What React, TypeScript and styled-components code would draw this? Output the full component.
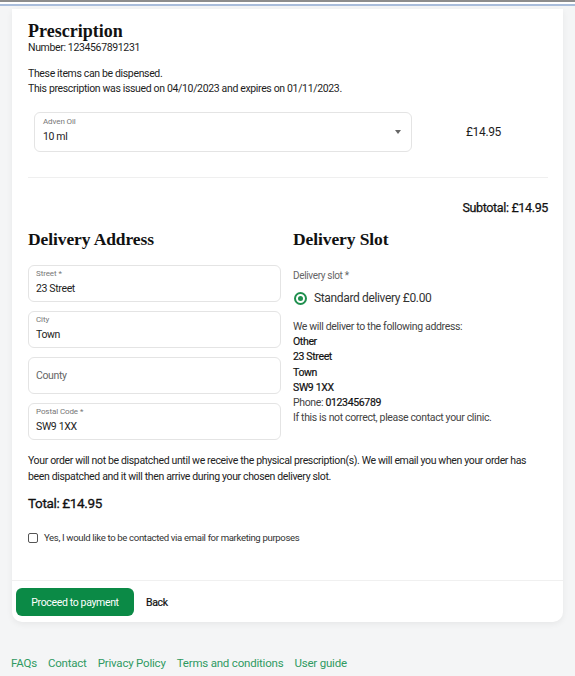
import React from "react";
import styled, { createGlobalStyle } from "styled-components";

const GlobalStyle = createGlobalStyle`
  body {
    margin: 0;
    background-color: #f4f5f6;
    font-family: Roboto, "Liberation Sans", sans-serif;
    letter-spacing: -0.35px;
    color: #1d1d1d;
  }
`;

const addressLines = ["Other", "23 Street", "Town", "SW9 1XX"];
const footerLinks = ["FAQs", "Contact", "Privacy Policy", "Terms and conditions", "User guide"];

export default function App() {
  return (
    <>
      <GlobalStyle />
      <TopBar />
      <Page>
        <Card>
          <CardBody>
            <Title>Prescription</Title>
            <SmallText>Number: 1234567891231</SmallText>
            <InfoBlock>
              <div>These items can be dispensed.</div>
              <div>This prescription was issued on 04/10/2023 and expires on 01/11/2023.</div>
            </InfoBlock>
            <ItemRow>
              <SelectBox>
                <FieldLabel>Adven Oil</FieldLabel>
                <FieldValue>10 ml</FieldValue>
                <Caret />
              </SelectBox>
              <Price>£14.95</Price>
            </ItemRow>
            <Divider />
            <Subtotal>Subtotal: £14.95</Subtotal>
            <Columns>
              <Column>
                <Heading>Delivery Address</Heading>
                <Fields>
                  <Field>
                    <FieldLabel>Street *</FieldLabel>
                    <FieldValue>23 Street</FieldValue>
                  </Field>
                  <Field>
                    <FieldLabel>City</FieldLabel>
                    <FieldValue>Town</FieldValue>
                  </Field>
                  <Field $empty>
                    <Placeholder>County</Placeholder>
                  </Field>
                  <Field>
                    <FieldLabel>Postal Code *</FieldLabel>
                    <FieldValue>SW9 1XX</FieldValue>
                  </Field>
                </Fields>
              </Column>
              <Column>
                <Heading>Delivery Slot</Heading>
                <SlotLabel>Delivery slot *</SlotLabel>
                <RadioRow>
                  <Radio />
                  Standard delivery £0.00
                </RadioRow>
                <AddressBlock>
                  <AddressLine>We will deliver to the following address:</AddressLine>
                  {addressLines.map((line) => (
                    <AddressLine key={line} $strong>
                      {line}
                    </AddressLine>
                  ))}
                  <AddressLine>
                    Phone: <Strong>0123456789</Strong>
                  </AddressLine>
                  <AddressLine>If this is not correct, please contact your clinic.</AddressLine>
                </AddressBlock>
              </Column>
            </Columns>
            <Notice>
              Your order will not be dispatched until we receive the physical prescription(s). We will email you
              when your order has been dispatched and it will then arrive during your chosen delivery slot.
            </Notice>
            <Total>Total: £14.95</Total>
            <CheckRow>
              <CheckBox />
              Yes, I would like to be contacted via email for marketing purposes
            </CheckRow>
          </CardBody>
          <CardFooter>
            <PrimaryButton>Proceed to payment</PrimaryButton>
            <LinkButton>Back</LinkButton>
          </CardFooter>
        </Card>
        <FooterLinks>
          {footerLinks.map((link) => (
            <FooterLink key={link}>{link}</FooterLink>
          ))}
        </FooterLinks>
      </Page>
    </>
  );
}

const TopBar = styled.div`
  height: 2px;
  background-color: #ffffff;
  border-top: 2px solid #8c8c8c;
  border-bottom: 2px solid #a9bddb;
`;

const Page = styled.div`
  padding: 3px 12px 0 12px;
`;

const Card = styled.div`
  background-color: #ffffff;
  border-radius: 0 0 10px 10px;
  box-shadow: 0 2px 6px rgba(0, 0, 0, 0.06);
`;

const CardBody = styled.div`
  padding: 12px 15px 37px 16px;
`;

const Title = styled.div`
  font-family: "Liberation Serif", serif;
  font-weight: bold;
  font-size: 18px;
  line-height: 20px;
  letter-spacing: 0;
  color: #111;
`;

const SmallText = styled.div`
  font-size: 10.5px;
  line-height: 13px;
`;

const InfoBlock = styled.div`
  margin-top: 12px;
  font-size: 10.5px;
  line-height: 15px;
`;

const ItemRow = styled.div`
  display: grid;
  grid-template-columns: 378px 1fr;
  align-items: center;
  margin: 16px 0 0 6px;
`;

const SelectBox = styled.div`
  position: relative;
  height: 40px;
  box-sizing: border-box;
  border: 1px solid #e4e4e4;
  border-radius: 6px;
  padding: 3px 8px 0;
`;

const Caret = styled.div`
  position: absolute;
  right: 10px;
  top: 17px;
  border-left: 3px solid transparent;
  border-right: 3px solid transparent;
  border-top: 4px solid #666;
`;

const Price = styled.div`
  font-size: 12px;
  justify-self: end;
  margin-right: 47px;
`;

const Divider = styled.div`
  border-top: 1px solid #efefef;
  margin-top: 25px;
`;

const Subtotal = styled.div`
  margin-top: 23px;
  text-align: right;
  font-size: 12.5px;
  line-height: 14px;
  color: #111;
  -webkit-text-stroke: 0.25px #111;
`;

const Columns = styled.div`
  display: grid;
  grid-template-columns: 253px 1fr;
  column-gap: 12px;
  margin-top: 14px;
`;

const Column = styled.div`
  display: flex;
  flex-direction: column;
`;

const Heading = styled.div`
  font-family: "Liberation Serif", serif;
  font-weight: bold;
  font-size: 17.5px;
  line-height: 20px;
  color: #111;
  margin-bottom: 16px;
  letter-spacing: -0.1px;
`;

const Fields = styled.div`
  display: flex;
  flex-direction: column;
  gap: 9px;
`;

const Field = styled.div<{ $empty?: boolean }>`
  height: 37px;
  box-sizing: border-box;
  border: 1px solid #e4e4e4;
  border-radius: 6px;
  padding: ${(p) => (p.$empty ? "0 7px" : "2px 7px 0")};
  display: flex;
  flex-direction: column;
  justify-content: ${(p) => (p.$empty ? "center" : "flex-start")};
`;

const FieldLabel = styled.div`
  font-size: 8px;
  line-height: 12px;
  letter-spacing: -0.1px;
  color: #777;
`;

const FieldValue = styled.div`
  font-size: 10.5px;
  line-height: 18px;
  color: #1d1d1d;
`;

const Placeholder = styled.div`
  font-size: 10.5px;
  color: #666;
`;

const SlotLabel = styled.div`
  font-size: 10px;
  line-height: 12px;
  color: #666;
  margin-top: 5px;
`;

const RadioRow = styled.div`
  display: flex;
  align-items: center;
  gap: 7px;
  font-size: 12px;
  color: #333;
  margin-top: 9px;
  margin-left: 1px;
`;

const Radio = styled.span`
  width: 9px;
  height: 9px;
  border-radius: 50%;
  border: 2px solid #1f8f4e;
  display: grid;
  place-items: center;
  &::after {
    content: "";
    width: 5px;
    height: 5px;
    border-radius: 50%;
    background-color: #1f8f4e;
  }
`;

const AddressBlock = styled.div`
  margin-top: 14px;
  font-size: 10.5px;
  line-height: 15.2px;
  color: #444;
`;

const AddressLine = styled.div<{ $strong?: boolean }>`
  color: ${(p) => (p.$strong ? "#111" : "#444")};
  -webkit-text-stroke: ${(p) => (p.$strong ? "0.2px #111" : "0")};
`;

const Strong = styled.span`
  color: #111;
  -webkit-text-stroke: 0.2px #111;
`;

const Notice = styled.div`
  margin-top: 13px;
  font-size: 10.5px;
  line-height: 16px;
  color: #222;
`;

const Total = styled.div`
  margin-top: 10px;
  font-size: 13.5px;
  line-height: 16px;
  color: #111;
  -webkit-text-stroke: 0.3px #111;
`;

const CheckRow = styled.div`
  display: flex;
  align-items: center;
  gap: 6px;
  margin-top: 21px;
  font-size: 9.6px;
  color: #333;
`;

const CheckBox = styled.span`
  width: 8px;
  height: 8px;
  border: 1.3px solid #555;
  border-radius: 2px;
  flex-shrink: 0;
`;

const CardFooter = styled.div`
  border-top: 1px solid #f0f0f0;
  display: flex;
  align-items: center;
  gap: 12px;
  padding: 7px 4px 6px 4px;
`;

const PrimaryButton = styled.button`
  background-color: #0b8a46;
  color: #fff;
  border: none;
  border-radius: 6px;
  height: 28px;
  width: 118px;
  font-family: inherit;
  letter-spacing: inherit;
  font-size: 10.5px;
`;

const LinkButton = styled.span`
  font-size: 10.5px;
  color: #111;
  -webkit-text-stroke: 0.2px #111;
`;

const FooterLinks = styled.div`
  display: flex;
  gap: 11px;
  margin: 34px 0 0 -1px;
  padding-bottom: 20px;
`;

const FooterLink = styled.a`
  font-size: 11.5px;
  letter-spacing: -0.2px;
  color: #2f9a62;
`;
